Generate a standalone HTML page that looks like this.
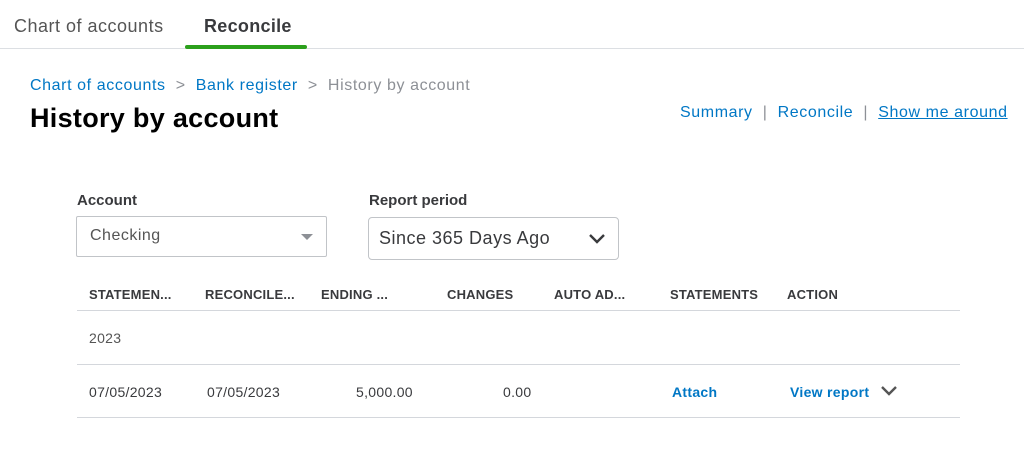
<!DOCTYPE html>
<html><head><style>
body{margin:0;width:1024px;height:454px;background:#fff;font-family:"Liberation Sans",sans-serif;position:relative;overflow:hidden;color:#393a3d}
.a{position:absolute;white-space:nowrap}
.blue{color:#0077c5 !important}
.th{font-size:13px;font-weight:bold;color:#393a3d;top:287px;letter-spacing:0.2px}
.td{font-size:14px;color:#393a3d;top:384px;letter-spacing:0.3px}
.line{position:absolute;left:77px;width:883px;height:1px;background:#d4d7dc}
</style></head><body>
<div class="a" style="left:14px;top:16px;font-size:18px;color:#555;letter-spacing:0.5px">Chart of accounts</div>
<div class="a" style="left:204px;top:16px;font-size:18px;font-weight:bold;color:#393a3d;letter-spacing:0.3px">Reconcile</div>
<div class="a" style="left:0;top:48px;width:1024px;height:1px;background:#dcdfe3"></div>
<div class="a" style="left:185px;top:45px;width:122px;height:4px;background:#2ca01c;border-radius:2px"></div>
<div class="a" style="left:30px;top:77px;font-size:16px;letter-spacing:0.6px"><span class="blue">Chart of accounts</span><span style="color:#8d9096">&nbsp;&nbsp;&gt;&nbsp;&nbsp;</span><span class="blue">Bank register</span><span style="color:#8d9096">&nbsp;&nbsp;&gt;&nbsp;&nbsp;History by account</span></div>
<div class="a" style="left:30px;top:103px;font-size:27px;font-weight:bold;color:#000;letter-spacing:0.3px">History by account</div>
<div class="a" style="left:680px;top:104px;font-size:16px;letter-spacing:0.6px"><span class="blue">Summary</span><span style="color:#8d9096">&nbsp;&nbsp;|&nbsp;&nbsp;</span><span class="blue">Reconcile</span><span style="color:#8d9096">&nbsp;&nbsp;|&nbsp;&nbsp;</span><span class="blue" style="text-decoration:underline">Show me around</span></div>
<div class="a" style="left:77px;top:192px;font-size:15px;font-weight:bold;color:#393a3d">Account</div>
<div class="a" style="left:369px;top:192px;font-size:15px;font-weight:bold;color:#393a3d">Report period</div>
<div class="a" style="left:76px;top:216px;width:249px;height:39px;border:1px solid #c1c4c8;border-radius:2px"></div>
<div class="a" style="left:90px;top:227px;font-size:16px;color:#555;letter-spacing:0.5px">Checking</div>
<div class="a" style="left:301px;top:234px;width:0;height:0;border-left:6px solid transparent;border-right:6px solid transparent;border-top:6px solid #8d9096"></div>
<div class="a" style="left:368px;top:217px;width:249px;height:41px;border:1px solid #c1c4c8;border-radius:4px"></div>
<div class="a" style="left:379px;top:228px;font-size:18px;color:#393a3d;letter-spacing:0.5px">Since 365 Days Ago</div>
<svg class="a" style="left:587px;top:232px" width="20" height="14"><path d="M3 3l7 7 7-7" stroke="#393a3d" stroke-width="2.4" fill="none"/></svg>
<div class="a th" style="left:89px">STATEMEN...</div>
<div class="a th" style="left:205px">RECONCILE...</div>
<div class="a th" style="left:321px">ENDING ...</div>
<div class="a th" style="left:447px">CHANGES</div>
<div class="a th" style="left:554px">AUTO AD...</div>
<div class="a th" style="left:670px">STATEMENTS</div>
<div class="a th" style="left:787px">ACTION</div>
<div class="line" style="top:310px"></div>
<div class="a" style="left:89px;top:330px;font-size:14px;color:#555;letter-spacing:0.3px">2023</div>
<div class="line" style="top:364px"></div>
<div class="a td" style="left:89px">07/05/2023</div>
<div class="a td" style="left:207px">07/05/2023</div>
<div class="a td" style="left:356px">5,000.00</div>
<div class="a td" style="left:503px">0.00</div>
<div class="a td blue" style="left:672px;font-weight:bold">Attach</div>
<div class="a td blue" style="left:790px;font-weight:bold">View report</div>
<svg class="a" style="left:879px;top:384px" width="20" height="14"><path d="M3 3l7 7 7-7" stroke="#555" stroke-width="2.4" fill="none"/></svg>
<div class="line" style="top:417px"></div>
</body></html>
